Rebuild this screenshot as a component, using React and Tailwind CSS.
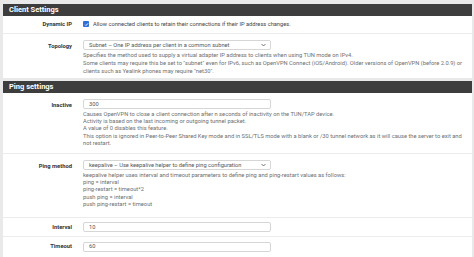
import React from 'react'

const font = { fontFamily: 'Roboto, "Liberation Sans", sans-serif' }

function Header({ title }) {
  return (
    <div className="h-[12px] bg-[#3d3d3d] pl-[6px] text-[7.5px] leading-[12px] font-bold text-white">{title}</div>
  )
}

function Label({ children, top }) {
  return (
    <div className={`w-[69px] shrink-0 text-right text-[5.8px] font-bold text-[#333] ${top ? 'pt-[2px]' : ''}`}>{children}</div>
  )
}

function Box({ value, select }) {
  return (
    <div className="w-[188px] h-[10px] border border-[#d6d6d6] rounded-[2px] bg-white flex items-center justify-between px-[5px] text-[5.7px] text-[#555]">
      <span>{value}</span>
      {select && (
        <svg width="5" height="4" viewBox="0 0 10 6" className="mr-[-1px]">
          <path d="M1 1l4 4 4-4" fill="none" stroke="#555" strokeWidth="1.6" />
        </svg>
      )}
    </div>
  )
}

function Help({ lines, loose }) {
  return (
    <div className={`text-[5.75px] text-[#6f6f6f] ${loose ? 'mt-[1px] leading-[8px]' : 'mt-[2px] leading-[7.2px]'}`}>
      {lines.map((l, i) => <div key={i}>{l}</div>)}
    </div>
  )
}

export default function App() {
  return (
    <div style={font} className="w-[474px] h-[257px] overflow-hidden bg-[#e9e9e9] pt-[4px] pl-[3px] pr-[2px]">
      <div className="bg-white">
        <Header title="Client Settings" />
        <div className="flex border-b border-[#ececec] h-[18px] items-center">
          <Label>Dynamic IP</Label>
          <div className="ml-[11px] flex items-center gap-[4px] text-[5.7px] text-[#444]">
            <span className="w-[6px] h-[6px] rounded-[1px] bg-[#2f6fd6] flex items-center justify-center">
              <svg width="5" height="5" viewBox="0 0 10 10"><path d="M2 5.2l2 2 4-4.5" fill="none" stroke="white" strokeWidth="1.8" /></svg>
            </span>
            <span>Allow connected clients to retain their connections if their IP address changes.</span>
          </div>
        </div>
        <div className="flex pt-[6px] pb-[3px]">
          <Label top>Topology</Label>
          <div className="flex-1 ml-[11px] pr-[6px]">
            <Box select value="Subnet – One IP address per client in a common subnet" />
            <Help loose lines={[
              'Specifies the method used to supply a virtual adapter IP address to clients when using TUN mode on IPv4.',
              'Some clients may require this be set to "subnet" even for IPv6, such as OpenVPN Connect (iOS/Android). Older versions of OpenVPN (before 2.0.9) or',
              'clients such as Yealink phones may require "net30".',
            ]} />
          </div>
        </div>
      </div>

      <div className="mt-[3px] bg-white">
        <Header title="Ping settings" />
        <div className="flex pt-[6px] pb-[6px] border-b border-[#ececec]">
          <Label top>Inactive</Label>
          <div className="flex-1 ml-[11px] pr-[6px]">
            <Box value="300" />
            <Help lines={[
              'Causes OpenVPN to close a client connection after n seconds of inactivity on the TUN/TAP device.',
              'Activity is based on the last incoming or outgoing tunnel packet.',
              'A value of 0 disables this feature.',
              'This option is ignored in Peer-to-Peer Shared Key mode and in SSL/TLS mode with a blank or /30 tunnel network as it will cause the server to exit and',
              'not restart.',
            ]} />
          </div>
        </div>
        <div className="flex pt-[6px] pb-[9px] border-b border-[#ececec]">
          <Label top>Ping method</Label>
          <div className="flex-1 ml-[11px] pr-[6px]">
            <Box select value="keepalive – Use keepalive helper to define ping configuration" />
            <Help lines={[
              'keepalive helper uses interval and timeout parameters to define ping and ping-restart values as follows:',
              'ping = interval',
              'ping-restart = timeout*2',
              'push ping = interval',
              'push ping-restart = timeout',
            ]} />
          </div>
        </div>
        <div className="flex h-[19px] items-center border-b border-[#ececec]">
          <Label>Interval</Label>
          <div className="ml-[11px]"><Box value="10" /></div>
        </div>
        <div className="flex h-[19px] items-center">
          <Label>Timeout</Label>
          <div className="ml-[11px]"><Box value="60" /></div>
        </div>
        <div className="h-[20px]" />
      </div>
    </div>
  )
}
